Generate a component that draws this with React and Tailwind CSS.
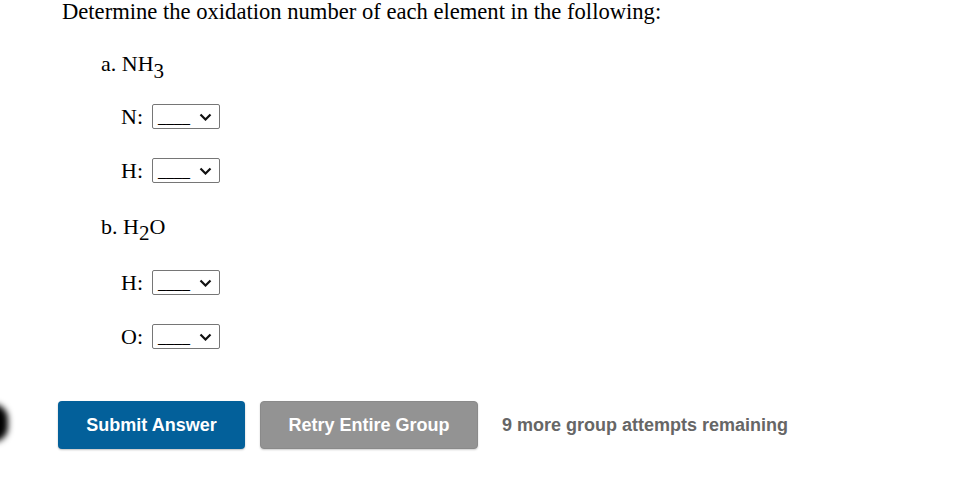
import React from 'react';

function Choice({ label }) {
  return (
    <div className="flex h-[25px] items-center pl-[121px]">
      <span className="w-[31px] text-[22px] leading-[24px]">{label}</span>
      <div className="flex h-[25px] w-[68px] items-center justify-between rounded-[2px] border border-[#767676] bg-white pl-[5px] pr-[7px]">
        <span className="text-[16px] leading-[20px] pt-[2px]">____</span>
        <svg width="13" height="8" viewBox="0 0 13 8" fill="none">
          <path d="M1.5 1.5 L6.5 6.5 L11.5 1.5" stroke="#111" strokeWidth="2.2" />
        </svg>
      </div>
    </div>
  );
}

export default function App() {
  return (
    <div className="relative h-[502px] w-[964px] overflow-hidden bg-white text-black font-['Liberation_Serif','Times_New_Roman',serif]">
      <div className="absolute left-[-22px] top-[404px] h-[38px] w-[30px] rounded-full bg-black blur-[3px]" />

      <div className="pl-[62px] text-[22.6px] leading-[24px]">
        Determine the oxidation number of each element in the following:
      </div>

      <div className="mt-[28px] pl-[101px] text-[22px] leading-[24px]">
        a. NH<sub className="relative top-[7px] text-[21px] align-baseline">3</sub>
      </div>
      <div className="mt-[28px]">
        <Choice label="N:" />
      </div>
      <div className="mt-[29px]">
        <Choice label="H:" />
      </div>

      <div className="mt-[32px] pl-[101px] text-[22px] leading-[24px]">
        b. H<sub className="relative top-[6px] text-[21px] align-baseline">2</sub>O
      </div>
      <div className="mt-[31px]">
        <Choice label="H:" />
      </div>
      <div className="mt-[29px]">
        <Choice label="O:" />
      </div>

      <div className="mt-[52px] flex items-center pl-[58px] font-['Liberation_Sans',Arial,sans-serif] font-bold">
        <button className="h-[48px] w-[187px] rounded-[4px] bg-[#03609a] text-[18px] text-white shadow-[0_1px_2px_rgba(0,0,0,0.25)]">
          Submit Answer
        </button>
        <button className="ml-[15px] h-[48px] w-[218px] rounded-[4px] border border-[#8a8a8a] bg-[#939393] text-[18px] text-white shadow-[0_1px_2px_rgba(0,0,0,0.2)]">
          Retry Entire Group
        </button>
        <span className="ml-[24px] text-[18px] text-[#666666]">9 more group attempts remaining</span>
      </div>
    </div>
  );
}
